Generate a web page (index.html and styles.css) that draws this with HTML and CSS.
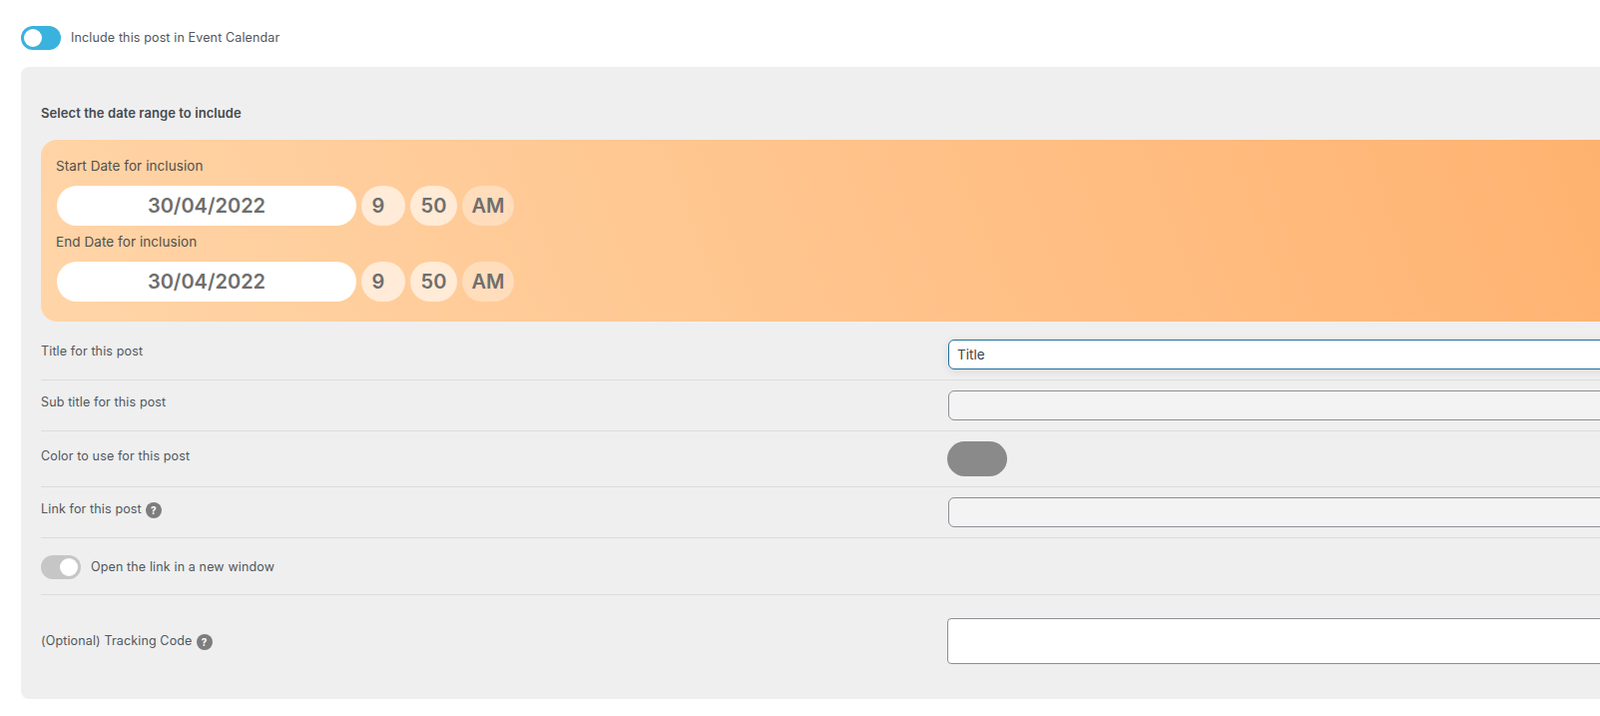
FILE: index.html
```html
<!DOCTYPE html>
<html lang="en">
<head>
    <meta charset="UTF-8">
    <meta name="viewport" content="width=device-width, initial-scale=1.0">
    <title>Event Calendar</title>
    <link rel="stylesheet" href="styles.css">
</head>
<body>

    <div class="switch-row top-switch">
        <span class="switch on"><span class="knob"></span></span>
        <span>Include this post in Event Calendar</span>
    </div>

    <div class="panel">
        <h2 class="panel-title">Select the date range to include</h2>

        <div class="date-box">
            <div class="date-label">Start Date for inclusion</div>
            <div class="date-fields">
                <input class="date-input" type="text" value="30/04/2022">
                <input class="time-input hour" type="text" value="9">
                <input class="time-input minute" type="text" value="50">
                <input class="time-input ampm" type="text" value="AM">
            </div>
            <div class="date-label end">End Date for inclusion</div>
            <div class="date-fields">
                <input class="date-input" type="text" value="30/04/2022">
                <input class="time-input hour" type="text" value="9">
                <input class="time-input minute" type="text" value="50">
                <input class="time-input ampm" type="text" value="AM">
            </div>
        </div>

        <div class="row first">
            <label class="row-label">Title for this post</label>
            <input class="text-input focused" type="text" value="Title">
        </div>
        <div class="row">
            <label class="row-label">Sub title for this post</label>
            <input class="text-input" type="text">
        </div>
        <div class="row">
            <label class="row-label color-label">Color to use for this post</label>
            <div class="color-pill"></div>
        </div>
        <div class="row">
            <label class="row-label">Link for this post <span class="help">?</span></label>
            <input class="text-input" type="text">
        </div>
        <div class="row switch-line">
            <div class="switch-row">
                <span class="switch"><span class="knob"></span></span>
                <span>Open the link in a new window</span>
            </div>
        </div>
        <div class="row last">
            <label class="row-label">(Optional) Tracking Code <span class="help">?</span></label>
            <textarea class="code-input"></textarea>
        </div>
    </div>

</body>
</html>
```

FILE: styles.css
```css
html, body {
    overflow: hidden;
}
body {
    margin: 0;
    height: 717px;
    background: #fff;
    color: #50575e;
    font-family: Inter, "Liberation Sans", sans-serif;
    font-size: 12.5px;
    line-height: 22px;
}
.switch-row {
    display: flex;
    align-items: center;
    gap: 10px;
    letter-spacing: 0.14px;
}
.top-switch {
    padding: 26px 0 0 21px;
}
.switch {
    display: flex;
    align-items: center;
    justify-content: flex-end;
    width: 40px;
    height: 24px;
    padding: 0 3px;
    box-sizing: border-box;
    border-radius: 12px;
    background: #c6c6c6;
}
.switch.on {
    justify-content: flex-start;
    background: #3ab2de;
}
.knob {
    width: 18px;
    height: 18px;
    border-radius: 50%;
    background: #fff;
}
.panel {
    width: 1660px;
    height: 633px;
    margin: 17px 0 0 21px;
    padding: 0 20px;
    box-sizing: border-box;
    border-radius: 8px;
    background: #efefef;
}
.panel-title {
    margin: 0;
    padding-top: 35px;
    font-size: 13px;
    font-weight: 600;
    line-height: 22px;
    letter-spacing: 0.07px;
    color: #444a50;
}
.date-box {
    margin-top: 16px;
    height: 182px;
    padding: 15px 16px 0;
    box-sizing: border-box;
    border-radius: 16px 0 0 16px;
    background: linear-gradient(70deg, #ffd5a8 0%, #ffb16e 100%);
}
.date-label {
    margin-left: -1px;
    font-size: 13.5px;
    letter-spacing: 0.07px;
    color: #50504c;
}
.date-label.end {
    margin-top: 5px;
}
.date-fields {
    display: flex;
    gap: 5px;
    margin-top: 9px;
}
.date-fields input {
    height: 40px;
    padding: 0;
    border: 0;
    box-sizing: border-box;
    text-align: center;
    font-family: inherit;
    font-size: 20px;
    font-weight: 600;
    color: #6e6e6e;
    outline: none;
}
.date-input {
    width: 300px;
    border-radius: 20px;
    background: #fff;
}
.time-input {
    border-radius: 20px;
    background: rgba(255, 255, 255, 0.6);
}
.date-fields .hour {
    width: 44px;
    padding-right: 10px;
}
.minute {
    width: 47px;
}
.date-fields .ampm {
    width: 52px;
    background: rgba(255, 255, 255, 0.35);
}
.row {
    display: grid;
    grid-template-columns: 908px 1fr;
    padding: 10px 0;
    border-bottom: 1px solid #dcdcde;
    letter-spacing: 0.14px;
}
.row.first {
    padding-top: 17.5px;
}
.row.switch-line {
    padding: 17px 0 15px;
    grid-template-columns: 1fr;
}
.row.last {
    padding-top: 23px;
    border-bottom: 0;
    align-items: center;
}
.row-label {
    display: flex;
    align-items: center;
    gap: 4px;
    height: 22px;
    margin-top: 1px;
}
.row.last .row-label {
    margin-top: 0;
}
.row .color-label {
    margin-top: 4px;
}
.help {
    display: inline-flex;
    align-items: center;
    justify-content: center;
    width: 16px;
    height: 16px;
    margin-top: 2px;
    border-radius: 50%;
    background: #7d7d7d;
    color: #fff;
    font-size: 10px;
    font-weight: 700;
    letter-spacing: 0;
}
.text-input {
    height: 30px;
    margin-left: 1px;
    padding: 0 8px;
    box-sizing: border-box;
    border: 1px solid #8c8f94;
    border-radius: 6px;
    background: #f3f3f3;
    font-family: inherit;
    font-size: 13.5px;
    color: #3c434a;
    outline: none;
}
.text-input.focused {
    border-color: #1f6f9f;
    background: #fff;
    box-shadow: 0 2px 8px rgba(0, 0, 0, 0.1);
}
.color-pill {
    width: 60px;
    height: 35px;
    border-radius: 18px;
    background: #8a8a8a;
}
.code-input {
    display: block;
    height: 46px;
    padding: 0;
    box-sizing: border-box;
    border: 1px solid #8c8f94;
    border-radius: 4px;
    background: #fff;
    resize: none;
    outline: none;
}
```
